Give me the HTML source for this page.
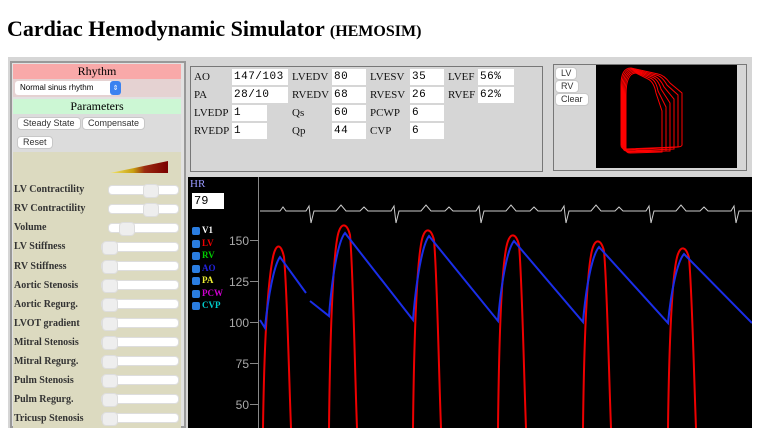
<!DOCTYPE html>
<html><head><meta charset="utf-8"><style>
*{margin:0;padding:0;box-sizing:border-box}
body{width:768px;height:428px;overflow:hidden;background:#fff;position:relative;font-family:"Liberation Serif",serif;}
.a{position:absolute}
h1{position:absolute;left:7px;top:16px;font-size:22px;font-weight:bold;white-space:nowrap}
h1 span{font-size:16px}
.btn{position:absolute;background:#fff;border:1px solid #c8c8c8;border-radius:4px;font-family:"Liberation Sans",sans-serif;font-size:9px;color:#333;height:13px;line-height:11px;padding:0 5px}
.lbl{position:absolute;left:14px;font-size:10px;font-weight:bold;color:#333}
.sl{position:absolute;left:101px;width:78px;height:10px;background:#fff;border:1px solid #ddd;border-radius:4px}
.th{position:absolute;top:-2px;width:16px;height:14px;background:#eee;border:1px solid #ddd;border-radius:4px}
.d{position:absolute;font-size:11px;color:#111;line-height:16px}
.v{position:absolute;background:#fff;font-family:"Liberation Mono",monospace;font-size:11px;height:16px;line-height:16px;padding-left:2px;letter-spacing:0.5px}
.cb{position:absolute;left:192px;width:8px;height:8px;background:#2a7de1;border-radius:2px}
.cl{position:absolute;left:202px;font-size:9px;font-weight:bold}
</style></head><body>
<h1>Cardiac Hemodynamic Simulator <span>(HEMOSIM)</span></h1>
<div class="a" style="left:8px;top:57px;width:760px;height:371px;background:#d6d6d6"></div>
<div class="a" style="left:752px;top:57px;width:16px;height:371px;background:#fff"></div>
<!-- left panel -->
<div class="a" style="left:10px;top:61px;width:176px;height:367px;background:#e2e2e2;border:2px solid #999"></div>
<div class="a" style="left:13px;top:64px;width:168px;height:15px;background:#f9a9a9;text-align:center;font-size:12px;line-height:15px">Rhythm</div>
<div class="a" style="left:13px;top:79px;width:168px;height:18px;background:#e5d2d2"></div>
<div class="a" style="left:15px;top:81px;width:106px;height:14px;background:#fff;border-radius:3px;font-family:'Liberation Sans',sans-serif;font-size:8px;line-height:14px;padding-left:5px">Normal sinus rhythm</div>
<div class="a" style="left:110px;top:81px;width:11px;height:14px;background:#3b82f0;border-radius:3px;color:#fff;font-size:7px;text-align:center;line-height:14px">⇕</div>
<div class="a" style="left:13px;top:99px;width:168px;height:15px;background:#ccf7d4;text-align:center;font-size:12px;line-height:15px">Parameters</div>
<div class="a" style="left:13px;top:114px;width:168px;height:38px;background:#dcdcdc"></div>
<div class="btn" style="left:17px;top:117px">Steady State</div>
<div class="btn" style="left:82px;top:117px">Compensate</div>
<div class="btn" style="left:17px;top:136px">Reset</div>
<div class="a" style="left:13px;top:152px;width:168px;height:276px;background:#dcdac0"></div>
<svg class="a" style="left:108px;top:160px" width="62" height="14"><defs><linearGradient id="g"><stop offset="0" stop-color="#f3e76a"/><stop offset="0.4" stop-color="#c8a010"/><stop offset="0.6" stop-color="#9a2a10"/><stop offset="1" stop-color="#7a0000"/></linearGradient></defs><polygon points="2,13 60,1 60,13" fill="url(#g)"/></svg>
<div class="lbl" style="top:184px">LV Contractility</div><div class="sl" style="top:185px;left:108px;width:71px"><div class="th" style="left:34px"></div></div>
<div class="lbl" style="top:203px">RV Contractility</div><div class="sl" style="top:204px;left:108px;width:71px"><div class="th" style="left:34px"></div></div>
<div class="lbl" style="top:222px">Volume</div><div class="sl" style="top:223px;left:108px;width:71px"><div class="th" style="left:10px"></div></div>
<div class="lbl" style="top:241px">LV Stiffness</div><div class="sl" style="top:242px"><div class="th" style="left:0"></div></div>
<div class="lbl" style="top:261px">RV Stiffness</div><div class="sl" style="top:261px"><div class="th" style="left:0"></div></div>
<div class="lbl" style="top:280px">Aortic Stenosis</div><div class="sl" style="top:280px"><div class="th" style="left:0"></div></div>
<div class="lbl" style="top:299px">Aortic Regurg.</div><div class="sl" style="top:299px"><div class="th" style="left:0"></div></div>
<div class="lbl" style="top:318px">LVOT gradient</div><div class="sl" style="top:318px"><div class="th" style="left:0"></div></div>
<div class="lbl" style="top:337px">Mitral Stenosis</div><div class="sl" style="top:337px"><div class="th" style="left:0"></div></div>
<div class="lbl" style="top:356px">Mitral Regurg.</div><div class="sl" style="top:356px"><div class="th" style="left:0"></div></div>
<div class="lbl" style="top:375px">Pulm Stenosis</div><div class="sl" style="top:375px"><div class="th" style="left:0"></div></div>
<div class="lbl" style="top:394px">Pulm Regurg.</div><div class="sl" style="top:394px"><div class="th" style="left:0"></div></div>
<div class="lbl" style="top:413px">Tricusp Stenosis</div><div class="sl" style="top:413px"><div class="th" style="left:0"></div></div>
<!-- data panel -->
<div class="a" style="left:190px;top:66px;width:353px;height:106px;border:1px solid #777"></div>
<div class="d" style="left:194px;top:69px">AO</div><div class="v" style="left:232px;top:69px;width:56px">147/103</div>
<div class="d" style="left:292px;top:69px">LVEDV</div><div class="v" style="left:332px;top:69px;width:34px">80</div>
<div class="d" style="left:370px;top:69px">LVESV</div><div class="v" style="left:410px;top:69px;width:34px">35</div>
<div class="d" style="left:448px;top:69px">LVEF</div><div class="v" style="left:478px;top:69px;width:36px">56%</div>
<div class="d" style="left:194px;top:87px">PA</div><div class="v" style="left:232px;top:87px;width:56px">28/10</div>
<div class="d" style="left:292px;top:87px">RVEDV</div><div class="v" style="left:332px;top:87px;width:34px">68</div>
<div class="d" style="left:370px;top:87px">RVESV</div><div class="v" style="left:410px;top:87px;width:34px">26</div>
<div class="d" style="left:448px;top:87px">RVEF</div><div class="v" style="left:478px;top:87px;width:36px">62%</div>
<div class="d" style="left:194px;top:105px">LVEDP</div><div class="v" style="left:232px;top:105px;width:35px">1</div>
<div class="d" style="left:292px;top:105px">Qs</div><div class="v" style="left:332px;top:105px;width:34px">60</div>
<div class="d" style="left:370px;top:105px">PCWP</div><div class="v" style="left:410px;top:105px;width:34px">6</div>
<div class="d" style="left:194px;top:123px">RVEDP</div><div class="v" style="left:232px;top:123px;width:35px">1</div>
<div class="d" style="left:292px;top:123px">Qp</div><div class="v" style="left:332px;top:123px;width:34px">44</div>
<div class="d" style="left:370px;top:123px">CVP</div><div class="v" style="left:410px;top:123px;width:34px">6</div>
<!-- loop panel -->
<div class="a" style="left:553px;top:64px;width:194px;height:107px;border:1px solid #777"></div>
<div class="btn" style="left:555px;top:67px">LV</div>
<div class="btn" style="left:555px;top:80px">RV</div>
<div class="btn" style="left:555px;top:93px">Clear</div>
<svg class="a" style="left:596px;top:65px" width="141" height="103"><rect width="141" height="103" fill="#000"/>
<g fill="none" stroke="#f00" stroke-width="1">
<path d="M25,20 Q25,3 35,3 L62,9 Q68,10 74,18 L86,28 L86,80 Q86,82 80,82 L30,84 Q25,84 25,80 Z"/>
<path d="M26,22 Q26,4 36,4 L60,10 Q66,11 71,20 L82,30 L82,82 L30,85 Q26,85 26,80 Z"/>
<path d="M27,24 Q27,5 37,5 L58,11 Q64,13 68,22 L78,34 L78,84 L31,86 Q27,86 27,82 Z"/>
<path d="M28,26 Q28,6 38,6 L56,12 Q62,14 65,24 L74,38 L74,86 L32,86 Q28,86 28,82 Z"/>
<path d="M29,28 Q29,7 39,7 L54,13 Q60,15 62,26 L70,42 L70,86 L33,87 Q29,87 29,83 Z"/>
<path d="M30,30 Q30,8 40,8 L52,14 Q58,17 60,28 L66,46 L66,87 L34,88 Q30,88 30,84 Z"/>
</g></svg>
<!-- chart -->
<svg class="a" style="left:188px;top:177px" width="564" height="251"><rect width="564" height="251" fill="#000"/>
<line x1="70.5" y1="0" x2="70.5" y2="251" stroke="#888"/>
<g stroke="#888"><line x1="62" y1="63.5" x2="70" y2="63.5"/><line x1="62" y1="104.5" x2="70" y2="104.5"/><line x1="62" y1="145.5" x2="70" y2="145.5"/><line x1="62" y1="186.5" x2="70" y2="186.5"/><line x1="62" y1="227.5" x2="70" y2="227.5"/></g>
<g fill="#aaa" font-family="Liberation Sans,sans-serif" font-size="12" text-anchor="end"><text x="61" y="68">150</text><text x="61" y="109">125</text><text x="61" y="150">100</text><text x="61" y="191">75</text><text x="61" y="232">50</text></g>
<path fill="none" stroke="#ccc" stroke-width="1" d="M72,34 L92,34 L95,30 L98,34 L118,34 L121,29 L123,46 L126,34 L148,34 L153,28 L158,34 L172,34 L176,30 L180,34 L203,34 L206,29 L208,46 L211,34 L233,34 L238,28 L243,34 L257,34 L261,30 L265,34 L288,34 L291,29 L293,46 L296,34 L318,34 L323,28 L328,34 L342,34 L346,30 L350,34 L373,34 L376,29 L378,46 L381,34 L403,34 L408,28 L413,34 L427,34 L431,30 L435,34 L458,34 L461,29 L463,46 L466,34 L488,34 L493,28 L498,34 L512,34 L516,30 L520,34 L543,34 L546,29 L548,46 L551,34 L564,34"/>
<g fill="none" stroke="#e00" stroke-width="2">
<path d="M75,251 C76,180 79,110 85,80 C88,66 93,66 96,80 C99,110 101,200 103,251"/>
<path d="M141,251 C142,160 145,70 151,54 C154,46 159,46 162,58 C165,90 167,200 169,251"/>
<path d="M225,251 C226,160 229,75 235,59 C238,51 243,51 246,63 C249,95 251,200 253,251"/>
<path d="M310,251 C311,160 314,80 320,64 C323,56 328,56 331,68 C334,100 336,200 338,251"/>
<path d="M395,251 C396,165 399,86 405,70 C408,62 413,62 416,74 C419,106 421,200 423,251"/>
<path d="M480,251 C481,170 484,93 490,77 C493,69 498,69 501,81 C504,113 506,200 508,251"/>
</g>
<path fill="none" stroke="#1a2ee8" stroke-width="2" d="M72,143 L77,151 C80,120 86,88 92,80 L118,116 M122,124 L141,139 C144,100 150,64 157,56 L225,143 C228,105 234,68 241,59 L310,144 C313,108 319,72 326,64 L395,145 C398,110 404,78 411,70 L480,146 C483,115 489,85 496,77 L564,146"/>
</svg>
<div class="a" style="left:190px;top:178px;font-size:11px;color:#99f">HR</div>
<div class="a" style="left:192px;top:193px;width:32px;height:16px;background:#fff;font-family:'Liberation Mono',monospace;font-size:12px;line-height:16px;padding-left:2px">79</div>
<div class="cb" style="top:227px"></div><div class="cl" style="top:225px;color:#fff">V1</div>
<div class="cb" style="top:240px"></div><div class="cl" style="top:238px;color:#e00">LV</div>
<div class="cb" style="top:252px"></div><div class="cl" style="top:250px;color:#0c0">RV</div>
<div class="cb" style="top:265px"></div><div class="cl" style="top:263px;color:#22d">AO</div>
<div class="cb" style="top:277px"></div><div class="cl" style="top:275px;color:#ee3">PA</div>
<div class="cb" style="top:290px"></div><div class="cl" style="top:288px;color:#c0c">PCW</div>
<div class="cb" style="top:302px"></div><div class="cl" style="top:300px;color:#0cc">CVP</div>
</body></html>
